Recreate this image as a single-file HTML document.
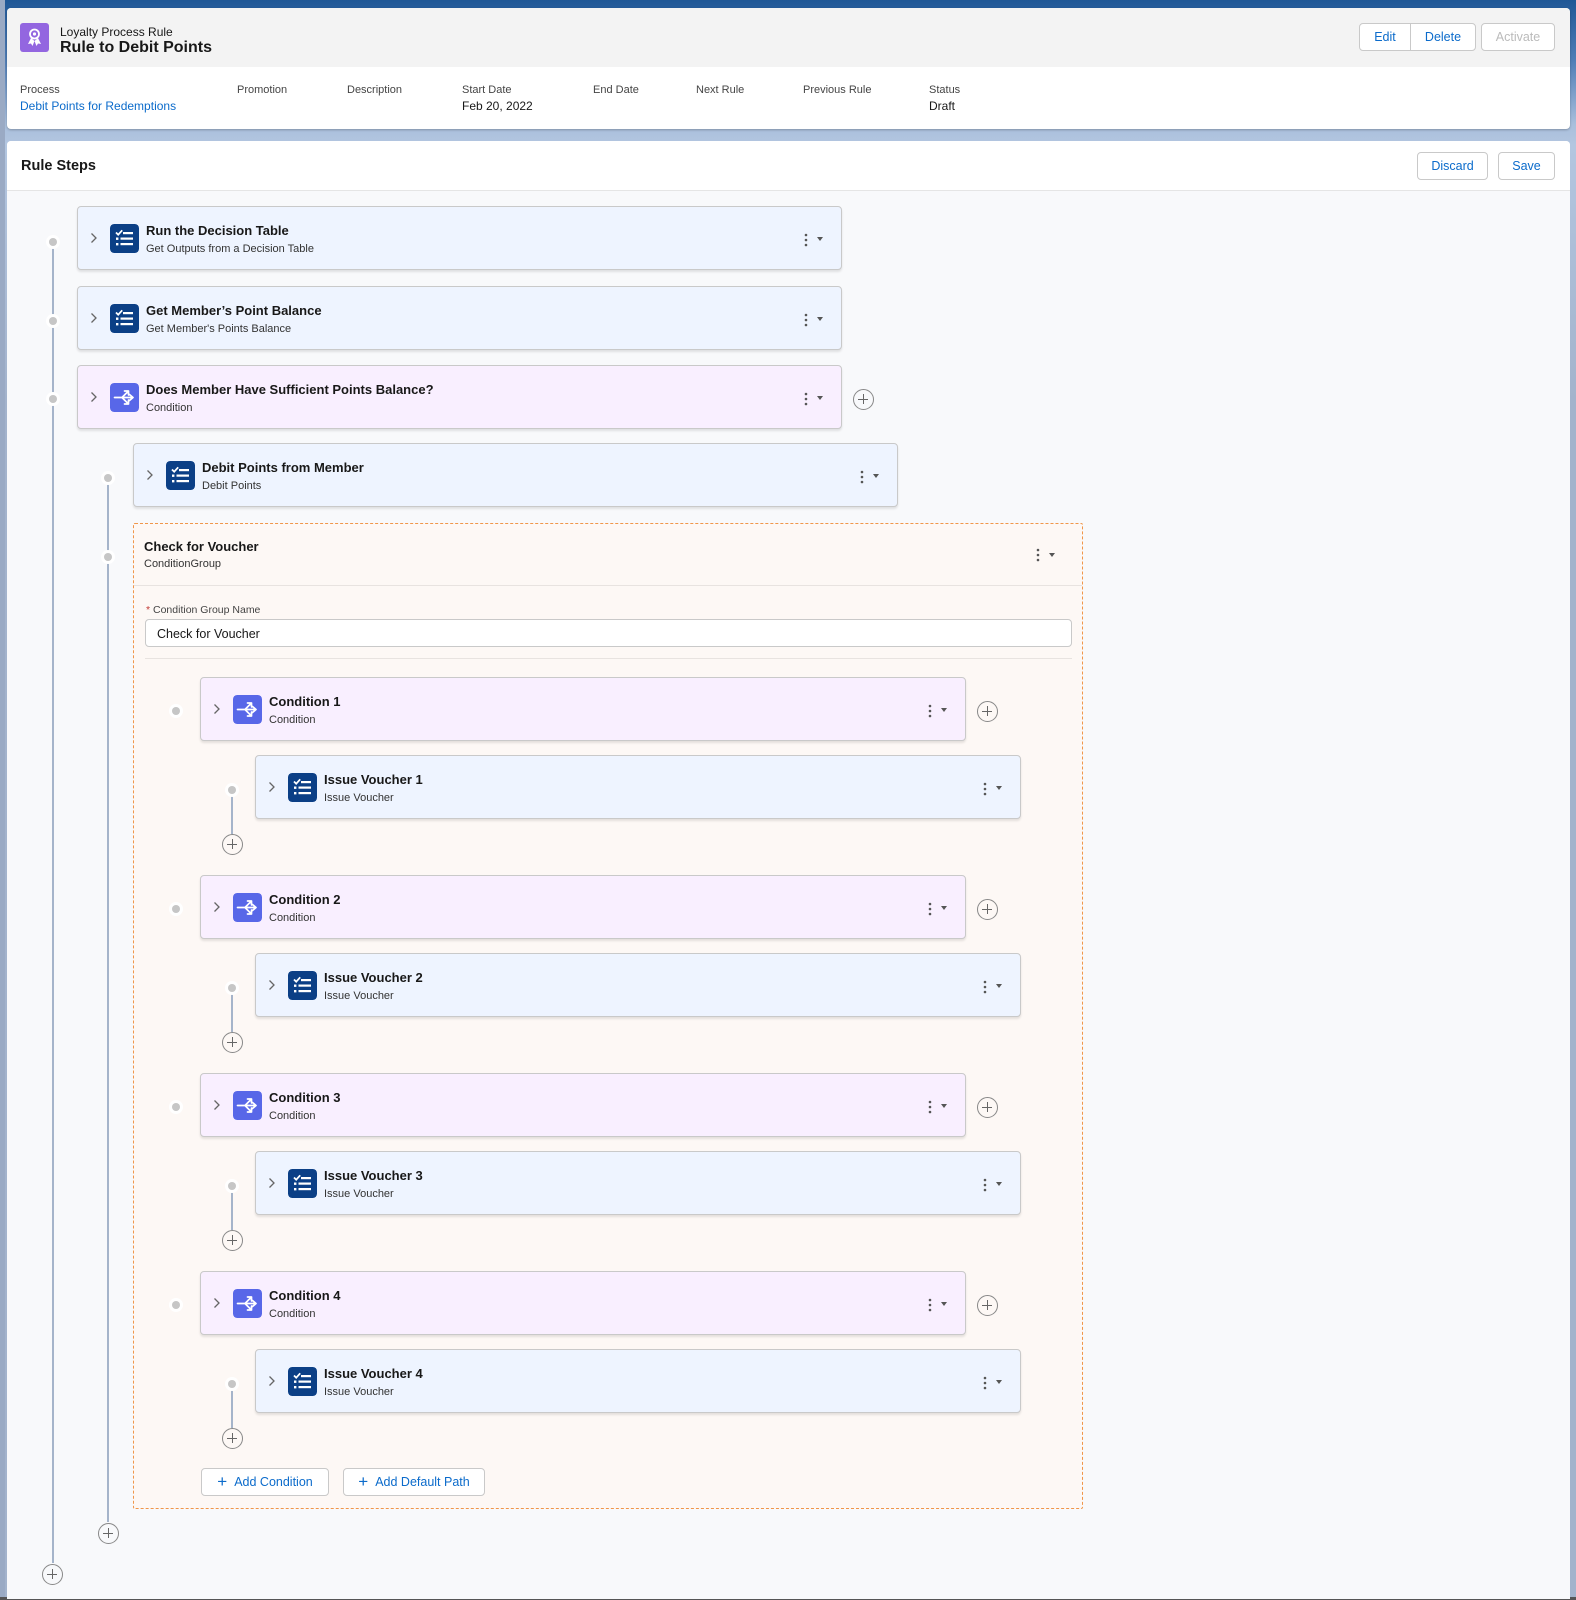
<!DOCTYPE html>
<html><head><meta charset="utf-8">
<style>
*{box-sizing:border-box;margin:0;padding:0}
html,body{width:1576px;height:1600px;overflow:hidden}
body{position:relative;font-family:"Liberation Sans",sans-serif;color:#181818;background:linear-gradient(#1f5796 0px,#4f7db6 60px,#a9bfdc 125px,#b3c6e0 145px,#a3b3cc 400px);}
.abs{position:absolute}
.hdr{left:7px;top:8px;width:1563px;height:121px;background:#fff;border-radius:4px;box-shadow:0 1px 2px rgba(0,0,0,.25);overflow:hidden}
.hdrtop{position:absolute;left:0;top:0;width:100%;height:59px;background:#f3f3f3}
.main{left:7px;top:141px;width:1563px;height:1458px;background:#f8f9fb;border-radius:4px 4px 0 0;overflow:hidden}
.mainhd{position:absolute;left:0;top:0;width:100%;height:50px;background:#fff;border-bottom:1px solid #e5e5e5}
.btn{position:absolute;height:28px;border:1px solid #c9c9c9;background:#fff;border-radius:4px;color:#0b6bcb;font-size:12.5px;display:flex;align-items:center;justify-content:center}
.lbl{position:absolute;font-size:11px;color:#444;top:84px}
.val{position:absolute;font-size:12px;top:99px;color:#181818}
.card{position:absolute;border:1px solid #c9c9c9;border-radius:4px;box-shadow:0 2px 2px rgba(0,0,0,.1);height:64px}
.blue{background:#eef4ff}
.pink{background:#f9efff}
.card .chev{position:absolute;left:12px;top:25px}
.card .ic{position:absolute;left:32px;top:17px;width:29px;height:29px;border-radius:4px}
.card .t{position:absolute;left:68px;top:16px;font-size:13px;font-weight:bold;white-space:nowrap}
.card .s{position:absolute;left:68px;top:36px;font-size:11px;color:#333;white-space:nowrap}
.card .k{position:absolute;right:33px;top:26px}
.card .c{position:absolute;right:18px;top:30px;width:0;height:0;border-left:3.5px solid transparent;border-right:3.5px solid transparent;border-top:4px solid #555}
.dot{position:absolute;width:14px;height:14px;border-radius:50%;background:#fff}
.dot:after{content:"";position:absolute;left:3px;top:3px;width:8px;height:8px;border-radius:50%;background:#c6c6c6}
.line{position:absolute;width:2px;background:#a5b4ca}
.plus{position:absolute;width:21px;height:21px;border-radius:50%;border:1.5px solid #888;background:transparent}
.plus:before{content:"";position:absolute;left:4px;top:8.5px;width:10px;height:1.2px;background:#666}
.plus:after{content:"";position:absolute;top:4px;left:8.5px;height:10px;width:1.2px;background:#666}
.grp{position:absolute;left:133px;top:523px;width:950px;height:986px;border:1px dashed #f0964a;background:#fdf8f5;border-radius:2px}
</style></head><body>
<svg width="0" height="0" style="position:absolute">
<defs>
<symbol id="list" viewBox="0 0 29 29"><rect width="29" height="29" rx="4" fill="#0b3f86"/><path d="M6 8.5l2.2 2.2 4-4.4" stroke="#fff" stroke-width="1.8" fill="none"/><rect x="13" y="8" width="10" height="2.2" fill="#fff"/><rect x="6" y="13.5" width="2.4" height="2.4" fill="#fff"/><rect x="10.5" y="13.5" width="12.5" height="2.2" fill="#fff"/><rect x="6" y="19" width="2.4" height="2.4" fill="#fff"/><rect x="10.5" y="19" width="12.5" height="2.2" fill="#fff"/></symbol>
<symbol id="cond" viewBox="0 0 29 29"><rect width="29" height="29" rx="4" fill="#5867e8"/><path d="M4.5 14.5H23M12 14.5L18 8.5M12 14.5L18 20.5M19.5 11.5l3.5 3-3.5 3M14.5 8h4v4M14.5 21h4v-4" stroke="#fff" stroke-width="1.7" fill="none" stroke-linecap="round" stroke-linejoin="round"/></symbol>
<symbol id="chev" viewBox="0 0 8 12"><path d="M1.5 1.5l4.5 4.5-4.5 4.5" stroke="#666" stroke-width="1.3" fill="none"/></symbol>
<symbol id="kebab" viewBox="0 0 4 14"><circle cx="2" cy="2" r="1.3" fill="#555"/><circle cx="2" cy="7" r="1.3" fill="#555"/><circle cx="2" cy="12" r="1.3" fill="#555"/></symbol>
</defs></svg>
<div class="abs" style="left:0;top:0;width:5px;height:1600px;background:#9aaac4"></div>
<div class="abs" style="left:0;top:1597px;width:1576px;height:3px;background:#555"></div>

<div class="abs hdr">
 <div class="hdrtop"></div>
 <div class="abs" style="left:13px;top:15px;width:29px;height:29px;background:#9366e0;border-radius:3px">
  <svg width="29" height="29" viewBox="0 0 29 29"><circle cx="14.5" cy="11" r="4.5" stroke="#fff" stroke-width="1.8" fill="none"/><circle cx="14.5" cy="11" r="1.6" fill="#fff"/><path d="M11 15l-3 6 3-.5 1.5 2.5 2-5M18 15l3 6-3-.5-1.5 2.5-2-5" fill="#fff"/></svg>
 </div>
 <div class="abs" style="left:53px;top:17px;font-size:12px">Loyalty Process Rule</div>
 <div class="abs" style="left:53px;top:31px;font-size:16px;font-weight:bold">Rule to Debit Points</div>
 <div class="btn" style="left:1352px;top:15px;width:52px;border-radius:4px 0 0 4px">Edit</div>
 <div class="btn" style="left:1403px;top:15px;width:66px;border-radius:0 4px 4px 0">Delete</div>
 <div class="btn" style="left:1474px;top:15px;width:74px;color:#bbb">Activate</div>
 <div class="lbl" style="left:13px;top:76px">Process</div>
 <div class="val" style="left:13px;top:91px;color:#0b6bcb">Debit Points for Redemptions</div>
 <div class="lbl" style="left:230px;top:76px">Promotion</div>
 <div class="lbl" style="left:340px;top:76px">Description</div>
 <div class="lbl" style="left:455px;top:76px">Start Date</div>
 <div class="val" style="left:455px;top:91px">Feb 20, 2022</div>
 <div class="lbl" style="left:586px;top:76px">End Date</div>
 <div class="lbl" style="left:689px;top:76px">Next Rule</div>
 <div class="lbl" style="left:796px;top:76px">Previous Rule</div>
 <div class="lbl" style="left:922px;top:76px">Status</div>
 <div class="val" style="left:922px;top:91px">Draft</div>
</div>

<div class="abs main">
 <div class="mainhd"></div>
 <div class="abs" style="left:14px;top:17px;font-size:14.5px;font-weight:bold">Rule Steps</div>
 <div class="btn" style="left:1410px;top:11px;width:71px">Discard</div>
 <div class="btn" style="left:1491px;top:11px;width:57px">Save</div>
</div>

<div class="line" style="left:52px;top:245px;height:1318px"></div>
<div class="line" style="left:107px;top:482px;height:1040px"></div>

<div class="dot" style="left:46px;top:235px"></div>
<div class="card blue" style="left:77px;top:206px;width:765px">
 <svg class="chev" width="8" height="12"><use href="#chev"/></svg>
 <svg class="ic" width="29" height="29"><use href="#list"/></svg>
 <div class="t">Run the Decision Table</div><div class="s">Get Outputs from a Decision Table</div>
 <svg class="k" width="4" height="14"><use href="#kebab"/></svg><div class="c"></div>
</div>
<div class="dot" style="left:46px;top:314px"></div>
<div class="card blue" style="left:77px;top:286px;width:765px">
 <svg class="chev" width="8" height="12"><use href="#chev"/></svg>
 <svg class="ic" width="29" height="29"><use href="#list"/></svg>
 <div class="t">Get Member’s Point Balance</div><div class="s">Get Member's Points Balance</div>
 <svg class="k" width="4" height="14"><use href="#kebab"/></svg><div class="c"></div>
</div>
<div class="dot" style="left:46px;top:392px"></div>
<div class="card pink" style="left:77px;top:365px;width:765px">
 <svg class="chev" width="8" height="12"><use href="#chev"/></svg>
 <svg class="ic" width="29" height="29"><use href="#cond"/></svg>
 <div class="t">Does Member Have Sufficient Points Balance?</div><div class="s">Condition</div>
 <svg class="k" width="4" height="14"><use href="#kebab"/></svg><div class="c"></div>
</div>
<div class="plus" style="left:853px;top:389px"></div>

<div class="dot" style="left:101px;top:471px"></div>
<div class="card blue" style="left:133px;top:443px;width:765px">
 <svg class="chev" width="8" height="12"><use href="#chev"/></svg>
 <svg class="ic" width="29" height="29"><use href="#list"/></svg>
 <div class="t">Debit Points from Member</div><div class="s">Debit Points</div>
 <svg class="k" width="4" height="14"><use href="#kebab"/></svg><div class="c"></div>
</div>
<div class="dot" style="left:101px;top:550px"></div>
<div class="grp">
 <div class="abs" style="left:10px;top:15px;font-size:13px;font-weight:bold">Check for Voucher</div>
 <div class="abs" style="left:10px;top:34px;font-size:11px;color:#333">ConditionGroup</div>
 <svg class="abs" style="right:42px;top:24px" width="4" height="14"><use href="#kebab"/></svg>
 <div class="abs" style="right:27px;top:29px;border-left:3.5px solid transparent;border-right:3.5px solid transparent;border-top:4px solid #555"></div>
 <div class="abs" style="left:0;top:61px;width:948px;height:1px;background:#e8e3e0"></div>
 <div class="abs" style="left:12px;top:80px;font-size:10.5px;color:#444"><span style="color:#c23934">*</span> Condition Group Name</div>
 <div class="abs" style="left:11px;top:95px;width:927px;height:28px;background:#fff;border:1px solid #c9c9c9;border-radius:4px;font-size:12.5px;padding:7px 0 0 11px">Check for Voucher</div>
 <div class="abs" style="left:11px;top:134px;width:927px;height:1px;background:#e8e3e0"></div>
 <div class="btn" style="left:67px;top:944px;width:128px"><span style="font-size:17px;margin-right:7px;font-weight:300">+</span>Add Condition</div>
 <div class="btn" style="left:209px;top:944px;width:142px"><span style="font-size:17px;margin-right:7px;font-weight:300">+</span>Add Default Path</div>
</div>

<div class="plus" style="left:98px;top:1523px"></div>
<div class="plus" style="left:42px;top:1564px"></div>

<div class="dot" style="left:169px;top:704px"></div>
<div class="card pink" style="left:200px;top:677px;width:766px">
 <svg class="chev" width="8" height="12"><use href="#chev"/></svg>
 <svg class="ic" width="29" height="29"><use href="#cond"/></svg>
 <div class="t">Condition 1</div><div class="s">Condition</div>
 <svg class="k" width="4" height="14"><use href="#kebab"/></svg><div class="c"></div>
</div>
<div class="plus" style="left:977px;top:701px"></div>
<div class="line" style="left:231px;top:794px;height:40px"></div>
<div class="dot" style="left:225px;top:783px"></div>
<div class="card blue" style="left:255px;top:755px;width:766px">
 <svg class="chev" width="8" height="12"><use href="#chev"/></svg>
 <svg class="ic" width="29" height="29"><use href="#list"/></svg>
 <div class="t">Issue Voucher 1</div><div class="s">Issue Voucher</div>
 <svg class="k" width="4" height="14"><use href="#kebab"/></svg><div class="c"></div>
</div>
<div class="plus" style="left:222px;top:834px"></div>

<div class="dot" style="left:169px;top:902px"></div>
<div class="card pink" style="left:200px;top:875px;width:766px">
 <svg class="chev" width="8" height="12"><use href="#chev"/></svg>
 <svg class="ic" width="29" height="29"><use href="#cond"/></svg>
 <div class="t">Condition 2</div><div class="s">Condition</div>
 <svg class="k" width="4" height="14"><use href="#kebab"/></svg><div class="c"></div>
</div>
<div class="plus" style="left:977px;top:899px"></div>
<div class="line" style="left:231px;top:992px;height:40px"></div>
<div class="dot" style="left:225px;top:981px"></div>
<div class="card blue" style="left:255px;top:953px;width:766px">
 <svg class="chev" width="8" height="12"><use href="#chev"/></svg>
 <svg class="ic" width="29" height="29"><use href="#list"/></svg>
 <div class="t">Issue Voucher 2</div><div class="s">Issue Voucher</div>
 <svg class="k" width="4" height="14"><use href="#kebab"/></svg><div class="c"></div>
</div>
<div class="plus" style="left:222px;top:1032px"></div>

<div class="dot" style="left:169px;top:1100px"></div>
<div class="card pink" style="left:200px;top:1073px;width:766px">
 <svg class="chev" width="8" height="12"><use href="#chev"/></svg>
 <svg class="ic" width="29" height="29"><use href="#cond"/></svg>
 <div class="t">Condition 3</div><div class="s">Condition</div>
 <svg class="k" width="4" height="14"><use href="#kebab"/></svg><div class="c"></div>
</div>
<div class="plus" style="left:977px;top:1097px"></div>
<div class="line" style="left:231px;top:1190px;height:40px"></div>
<div class="dot" style="left:225px;top:1179px"></div>
<div class="card blue" style="left:255px;top:1151px;width:766px">
 <svg class="chev" width="8" height="12"><use href="#chev"/></svg>
 <svg class="ic" width="29" height="29"><use href="#list"/></svg>
 <div class="t">Issue Voucher 3</div><div class="s">Issue Voucher</div>
 <svg class="k" width="4" height="14"><use href="#kebab"/></svg><div class="c"></div>
</div>
<div class="plus" style="left:222px;top:1230px"></div>

<div class="dot" style="left:169px;top:1298px"></div>
<div class="card pink" style="left:200px;top:1271px;width:766px">
 <svg class="chev" width="8" height="12"><use href="#chev"/></svg>
 <svg class="ic" width="29" height="29"><use href="#cond"/></svg>
 <div class="t">Condition 4</div><div class="s">Condition</div>
 <svg class="k" width="4" height="14"><use href="#kebab"/></svg><div class="c"></div>
</div>
<div class="plus" style="left:977px;top:1295px"></div>
<div class="line" style="left:231px;top:1388px;height:40px"></div>
<div class="dot" style="left:225px;top:1377px"></div>
<div class="card blue" style="left:255px;top:1349px;width:766px">
 <svg class="chev" width="8" height="12"><use href="#chev"/></svg>
 <svg class="ic" width="29" height="29"><use href="#list"/></svg>
 <div class="t">Issue Voucher 4</div><div class="s">Issue Voucher</div>
 <svg class="k" width="4" height="14"><use href="#kebab"/></svg><div class="c"></div>
</div>
<div class="plus" style="left:222px;top:1428px"></div>
</body></html>
